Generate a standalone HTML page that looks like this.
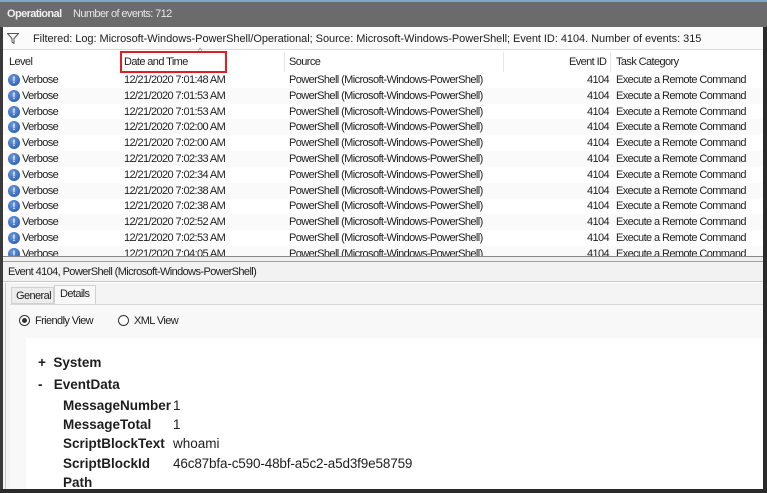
<!DOCTYPE html>
<html><head><style>
*{margin:0;padding:0;box-sizing:border-box}
body{width:767px;height:493px;overflow:hidden;background:#fff;font-family:"Liberation Sans",sans-serif;font-size:11px;color:#1e1e1e;position:relative}
.a{position:absolute;white-space:nowrap}
.n{letter-spacing:-0.6px}
.row{position:absolute;left:3px;width:760px;height:16px;line-height:16px;letter-spacing:-0.6px}
.row span{position:absolute}
.ic{left:5px;top:2px;width:12px;height:12px;border-radius:50%;background:radial-gradient(circle at 40% 35%,#6a9be0,#1f4fa8);color:#fff;font-weight:bold;font-size:9px;line-height:12px;text-align:center;letter-spacing:0}
.b{font-weight:bold;font-size:13.5px}
</style></head><body>
<div class="a" style="left:0;top:0;width:767px;height:2px;background:#7fa6c9"></div>
<div class="a" style="left:0;top:2px;width:767px;height:25px;background:#6b6b6b"></div>
<div class="a n" style="left:7px;top:8px;color:#f0f0f0;font-weight:bold;font-size:11px">Operational</div>
<div class="a n" style="left:73px;top:8px;color:#e8e8e8;font-size:11px">Number of events: 712</div>
<div class="a" style="left:0;top:27px;width:3px;height:466px;background:#3a3a3a"></div>
<div class="a" style="left:763px;top:27px;width:4px;height:466px;background:#2a2a2a"></div>
<div class="a" style="left:0;top:489px;width:767px;height:4px;background:#2a2a2a"></div>
<div class="a" style="left:3px;top:27px;width:760px;height:23px;background:#fbfbfb;border-bottom:1px solid #dcdcdc"></div>
<svg class="a" style="left:7px;top:33px" width="12" height="11"><path d="M0.5 0.5H11.5L7 5.5V10.5L5 9V5.5Z" fill="none" stroke="#555"/></svg>
<div class="a" style="left:33px;top:33px;letter-spacing:-0.05px">Filtered: Log: Microsoft-Windows-PowerShell/Operational; Source: Microsoft-Windows-PowerShell; Event ID: 4104. Number of events: 315</div>
<div class="a" style="left:3px;top:51px;width:760px;height:21px;background:#fff"></div>
<div class="a" style="left:120px;top:52px;width:1px;height:20px;background:#e5e5e5"></div>
<div class="a" style="left:284px;top:52px;width:1px;height:20px;background:#e5e5e5"></div>
<div class="a" style="left:503px;top:52px;width:1px;height:20px;background:#e5e5e5"></div>
<div class="a" style="left:610px;top:52px;width:1px;height:20px;background:#e5e5e5"></div>
<div class="a n" style="left:9px;top:56px">Level</div>
<div class="a n" style="left:124px;top:56px">Date and Time</div>
<div class="a" style="left:198px;top:46px;font-size:9px;color:#999">^</div>
<div class="a n" style="left:289px;top:56px">Source</div>
<div class="a n" style="left:569px;top:56px">Event ID</div>
<div class="a n" style="left:616px;top:56px">Task Category</div>
<div class="a" style="left:120px;top:51px;width:107px;height:22px;border:2px solid #e02020"></div>
<div id="rows"></div>
<script>
var t=["7:01:48","7:01:53","7:01:53","7:02:00","7:02:00","7:02:33","7:02:34","7:02:38","7:02:38","7:02:52","7:02:53","7:04:05"];
var h="";
for(var i=0;i<12;i++){var y=72+i*15.8;
h+='<div class="row" style="top:'+y+'px;'+(i%2?'background:#fafafa':'')+'"><span class="ic">!</span><span style="left:19px">Verbose</span><span style="left:121px">12/21/2020 '+t[i]+' AM</span><span style="left:286px">PowerShell (Microsoft-Windows-PowerShell)</span><span style="left:584px">4104</span><span style="left:613px">Execute a Remote Command</span></div>';}
document.getElementById('rows').innerHTML=h;
</script>
<div class="a" style="left:3px;top:256px;width:760px;height:6px;background:#f0f0f0;border-top:1px solid #888;border-bottom:1px solid #a0a0a0"></div>
<div class="a" style="left:3px;top:262px;width:760px;height:20px;background:#f2f2f2;border-bottom:1px solid #c8c8c8"></div>
<div class="a n" style="left:8px;top:266px">Event 4104, PowerShell (Microsoft-Windows-PowerShell)</div>
<div class="a" style="left:3px;top:283px;width:760px;height:206px;background:#f4f4f4"></div>
<div class="a" style="left:5px;top:283px;width:1px;height:206px;background:#c8c8c8"></div>
<div class="a" style="left:11px;top:287px;width:43px;height:17px;border:1px solid #d0d0d0;background:#ececec"></div>
<div class="a n" style="left:16px;top:290px">General</div>
<div class="a" style="left:54px;top:285px;width:42px;height:20px;border:1px solid #d0d0d0;border-bottom:none;background:#f8f8f8"></div>
<div class="a n" style="left:60px;top:288px">Details</div>
<div class="a" style="left:10px;top:304px;width:753px;height:1px;background:#d8d8d8"></div>
<div class="a" style="left:10px;top:305px;width:753px;height:184px;background:#f8f8f8"></div>
<div class="a" style="left:19px;top:315px;width:11px;height:11px;border-radius:50%;border:1px solid #333;background:#fff"></div>
<div class="a" style="left:22px;top:318px;width:5px;height:5px;border-radius:50%;background:#333"></div>
<div class="a n" style="left:35px;top:315px">Friendly View</div>
<div class="a" style="left:118px;top:315px;width:11px;height:11px;border-radius:50%;border:1px solid #333;background:#fff"></div>
<div class="a n" style="left:134px;top:315px">XML View</div>
<div class="a" style="left:26px;top:338px;width:737px;height:151px;background:#fff"></div>
<div class="a b" style="left:38px;top:355px">+&nbsp; System</div>
<div class="a b" style="left:38px;top:377px">-&nbsp;&nbsp; EventData</div>
<div class="a b" style="left:63px;top:398px">MessageNumber</div><div class="a" style="left:173px;top:398px;font-size:13.5px">1</div>
<div class="a b" style="left:63px;top:417px">MessageTotal</div><div class="a" style="left:173px;top:417px;font-size:13.5px">1</div>
<div class="a b" style="left:63px;top:436px">ScriptBlockText</div><div class="a" style="left:173px;top:436px;font-size:13.5px">whoami</div>
<div class="a b" style="left:63px;top:456px">ScriptBlockId</div><div class="a" style="left:173px;top:456px;font-size:13.5px;letter-spacing:-0.15px">46c87bfa-c590-48bf-a5c2-a5d3f9e58759</div>
<div class="a b" style="left:63px;top:475px">Path</div>
</body></html>
